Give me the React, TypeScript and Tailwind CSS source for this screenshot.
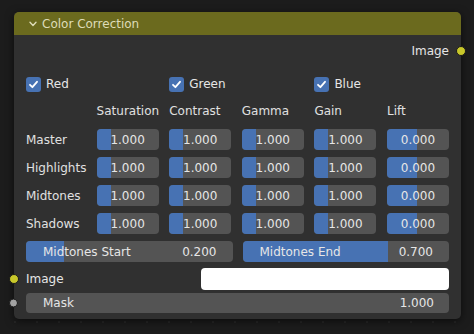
const COLUMNS = ['Saturation', 'Contrast', 'Gamma', 'Gain', 'Lift']

const ROWS = [
  { label: 'Master', values: ['1.000', '1.000', '1.000', '1.000', '0.000'] },
  { label: 'Highlights', values: ['1.000', '1.000', '1.000', '1.000', '0.000'] },
  { label: 'Midtones', values: ['1.000', '1.000', '1.000', '1.000', '0.000'] },
  { label: 'Shadows', values: ['1.000', '1.000', '1.000', '1.000', '0.000'] },
]

function Socket({ side, color }: { side: 'left' | 'right'; color: 'yellow' | 'grey' }) {
  return (
    <span
      className={`absolute top-1/2 -translate-y-1/2 rounded-full border border-[#1a1a1a] ${
        side === 'left' ? '-left-[17px]' : '-right-[17px]'
      } ${color === 'yellow' ? 'w-[10px] h-[10px] bg-[#c8c72a]' : 'w-[9px] h-[9px] bg-[#a3a3a3]'}`}
    />
  )
}

function Checkbox({ label }: { label: string }) {
  return (
    <div className="flex items-center gap-[5px]">
      <span className="w-[15px] h-[15px] rounded-[3px] bg-[#4772b3] flex items-center justify-center">
        <svg width="11" height="11" viewBox="0 0 11 11">
          <polyline points="2,5.8 4.4,8.2 9,2.8" fill="none" stroke="#ffffff" strokeWidth="1.8" strokeLinecap="round" strokeLinejoin="round" />
        </svg>
      </span>
      <span className="text-[#e6e6e6]">{label}</span>
    </div>
  )
}

function NumField({ value }: { value: string }) {
  const fill = value === '0.000' ? 'w-[30px]' : 'w-[14px]'
  return (
    <div className="relative h-[21px] rounded-[4px] bg-[#545454] overflow-hidden">
      <div className={`absolute inset-y-0 left-0 bg-[#4772b3] ${fill}`} />
      <span className="relative flex h-full items-center justify-center text-[#e6e6e6]">{value}</span>
    </div>
  )
}

function Slider({ label, value, fill }: { label: string; value: string; fill: string }) {
  return (
    <div className="relative h-[21px] rounded-[4px] bg-[#545454] overflow-hidden">
      <div className={`absolute inset-y-0 left-0 bg-[#4772b3] ${fill}`} />
      <div className="relative flex h-full items-center justify-between pl-[17px] pr-[16px] text-[#e6e6e6]">
        <span>{label}</span>
        <span>{value}</span>
      </div>
    </div>
  )
}

export default function App() {
  return (
    <div className="w-[474px] h-[334px] overflow-hidden bg-[#1c1c1c] bg-[radial-gradient(circle,#272727_1px,transparent_1.5px)] bg-[length:22px_22px] bg-[position:4px_3px] pt-[12px] pl-[14px] font-['DejaVu_Sans','Noto_Sans',sans-serif] text-[12px] leading-none">
      <div className="w-[447px] rounded-[5px] bg-[#303030] shadow-[0_2px_8px_rgba(0,0,0,0.6)]">
        {/* header */}
        <div className="h-[23px] rounded-t-[5px] bg-[#6b6a1e] flex items-center pl-[15px] gap-[5px] text-[12px] text-[#dedcb8]">
          <svg width="8" height="6" viewBox="0 0 8 6">
            <polyline points="1,1.2 4,4.4 7,1.2" fill="none" stroke="#dedcb8" strokeWidth="1.4" strokeLinecap="round" strokeLinejoin="round" />
          </svg>
          <span>Color Correction</span>
        </div>

        <div className="px-[12px] pt-[5px] pb-[6px] flex flex-col">
          {/* output */}
          <div className="relative h-[22px] flex items-center justify-end text-[#e6e6e6]">
            Image
            <Socket side="right" color="yellow" />
          </div>

          {/* channels */}
          <div className="mt-[11px] h-[22px] grid grid-cols-[60px_repeat(5,62px)] gap-x-[10.6px] items-center">
            <div className="col-start-1">
              <Checkbox label="Red" />
            </div>
            <div className="col-start-3">
              <Checkbox label="Green" />
            </div>
            <div className="col-start-5">
              <Checkbox label="Blue" />
            </div>
          </div>

          {/* grid */}
          <div className="mt-[5px] grid grid-cols-[60px_repeat(5,62px)] gap-x-[10.6px] gap-y-[7px] text-[#e0e0e0]">
            <div className="h-[22px]" />
            {COLUMNS.map((c) => (
              <div key={c} className="h-[22px] flex items-center pl-[1px] -mx-[1px] whitespace-nowrap">
                {c}
              </div>
            ))}
            {ROWS.map((r) => (
              <>
                <div key={r.label} className="h-[21px] flex items-center whitespace-nowrap">
                  {r.label}
                </div>
                {r.values.map((v, i) => (
                  <NumField key={r.label + i} value={v} />
                ))}
              </>
            ))}
          </div>

          {/* midtones range */}
          <div className="mt-[7px] grid grid-cols-2 gap-x-[10px]">
            <Slider label="Midtones Start" value="0.200" fill="w-[38px]" />
            <Slider label="Midtones End" value="0.700" fill="w-[145px]" />
          </div>

          {/* image input */}
          <div className="relative mt-[6px] h-[22px] flex items-center justify-between text-[#e6e6e6]">
            <Socket side="left" color="yellow" />
            <span>Image</span>
            <div className="w-[248px] h-[22px] rounded-[4px] bg-white" />
          </div>

          {/* mask */}
          <div className="relative mt-[3px] h-[20px] rounded-[4px] bg-[#545454] flex items-center justify-between pl-[17px] pr-[15px] text-[#e6e6e6]">
            <Socket side="left" color="grey" />
            <span>Mask</span>
            <span>1.000</span>
          </div>
        </div>
      </div>
    </div>
  )
}
